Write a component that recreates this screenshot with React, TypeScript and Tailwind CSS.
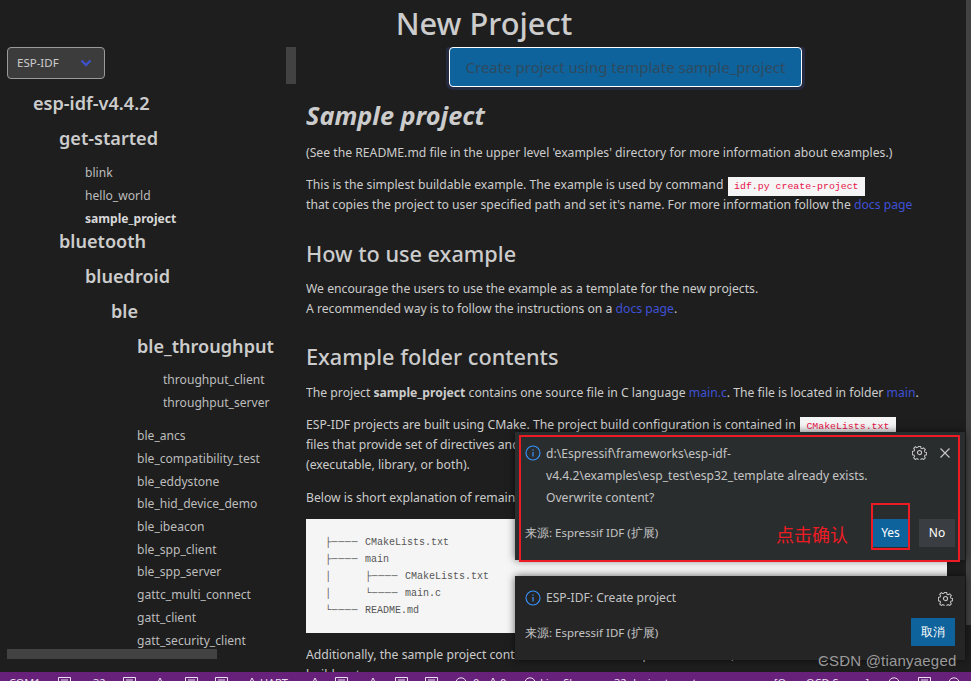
import React from "react";

const sans = "font-['Noto_Sans','Open_Sans',sans-serif]";
const mono = "font-['Liberation_Mono','DejaVu_Sans_Mono',monospace]";

function Code({ children }: { children: React.ReactNode }) {
  return (
    <code className={`${mono} bg-[#f5f5f5] text-[#e8124a] text-[9.9px] leading-none px-[6.5px] py-[4px] ml-[1px]`}>{children}</code>
  );
}

function A({ children }: { children: React.ReactNode }) {
  return <a className="text-[#3f51d6]">{children}</a>;
}

function Big({ pl, children }: { pl: string; children: React.ReactNode }) {
  return <div className={`${pl} h-[35px] flex items-center text-[18.1px] font-semibold text-[#cccccc] leading-none`}>{children}</div>;
}

function Small({ pl, bold, children }: { pl: string; bold?: boolean; children: React.ReactNode }) {
  return (
    <div className={`${pl} h-[22.7px] flex items-center text-[12.1px] leading-none ${bold ? "font-bold text-[#d8d8d8]" : "text-[#bdbdbd]"}`}>
      {children}
    </div>
  );
}

function Info() {
  return (
    <svg width="16" height="16" viewBox="0 0 16 16" fill="none" className="shrink-0">
      <circle cx="8" cy="8" r="7" stroke="#3794ff" strokeWidth="1.1" />
      <rect x="7.4" y="7" width="1.2" height="4.5" fill="#3794ff" />
      <rect x="7.4" y="4.4" width="1.2" height="1.3" fill="#3794ff" />
    </svg>
  );
}

function Gear() {
  return (
    <svg width="15" height="15" viewBox="0 0 16 16" fill="none" stroke="#c5c5c5" strokeWidth="1.2" className="shrink-0">
      <circle cx="8" cy="8" r="2.2" />
      <path d="M6.6 1h2.8l.4 2 1.4.6 1.7-1.1 2 2-1.1 1.7.6 1.4 2 .4v2.8l-2 .4-.6 1.4 1.1 1.7-2 2-1.7-1.1-1.4.6-.4 2H6.6l-.4-2-1.4-.6-1.7 1.1-2-2 1.1-1.7-.6-1.4-2-.4V6.6l2-.4.6-1.4L1.1 3.1l2-2 1.7 1.1 1.4-.6z" transform="translate(0.8 0.8) scale(0.9)" />
    </svg>
  );
}

function Close() {
  return (
    <svg width="12" height="12" viewBox="0 0 12 12" stroke="#c5c5c5" strokeWidth="1.2" className="shrink-0">
      <path d="M1.5 1.5l9 9M10.5 1.5l-9 9" />
    </svg>
  );
}

function Box({ w }: { w: string }) {
  return (
    <div className={`${w} shrink-0`}>
      <svg width="13" height="10" viewBox="0 0 13 10" fill="none" stroke="#e8dff0" strokeWidth="1">
        <path d="M.5 10V.5h12V10M3 3h7" />
      </svg>
    </div>
  );
}

function Peak({ w }: { w: string }) {
  return (
    <div className={`${w} shrink-0`}>
      <svg width="10" height="10" viewBox="0 0 10 10" fill="none" stroke="#e8dff0" strokeWidth="1">
        <path d="M1 9L5 1l4 8" />
      </svg>
    </div>
  );
}

function Round({ w }: { w: string }) {
  return (
    <div className={`${w} shrink-0`}>
      <svg width="12" height="10" viewBox="0 0 12 10" fill="none" stroke="#e8dff0" strokeWidth="1">
        <circle cx="6" cy="6" r="5.2" />
      </svg>
    </div>
  );
}

function Label({ w, children }: { w: string; children: React.ReactNode }) {
  return <span className={`${w} shrink-0 -mt-[1px] whitespace-nowrap`}>{children}</span>;
}

function Tree({ children }: { children: React.ReactNode }) {
  return <span className="inline-block w-[40px] tracking-[0.6px]">{children}</span>;
}

export default function App() {
  return (
    <div className={`${sans} relative w-[971px] h-[681px] overflow-hidden bg-[#1e1e1e] text-[#cccccc] flex flex-col`}>
      <div className="h-[47px] shrink-0 flex items-center justify-center text-[30.8px] font-medium leading-none text-[#cccccc] pr-[3px]">
        New Project
      </div>

      <div className="flex-1 min-h-0 flex">
        {/* Sidebar */}
        <div className="relative w-[296px] shrink-0 overflow-hidden">
          <div className="ml-[7px] w-[98px] h-[32px] rounded-[4px] border border-[#9a9a9a] bg-[#3c3c3c] flex items-center pl-[9px] text-[11.5px] text-[#cccccc]">
            ESP-IDF
            <svg width="12" height="8" viewBox="0 0 12 8" className="ml-[21px]" fill="none" stroke="#3f51c8" strokeWidth="2.4">
              <path d="M1.5 1.5L6 6l4.5-4.5" />
            </svg>
          </div>
          <div className="mt-[7px]">
            <Big pl="pl-[33px]">esp-idf-v4.4.2</Big>
            <Big pl="pl-[59px]">get-started</Big>
            <div className="mt-[6px] -mb-[7px]">
              <Small pl="pl-[85px]">blink</Small>
              <Small pl="pl-[85px]">hello_world</Small>
              <Small pl="pl-[85px]" bold>sample_project</Small>
            </div>
            <Big pl="pl-[59px]">bluetooth</Big>
            <Big pl="pl-[85px]">bluedroid</Big>
            <Big pl="pl-[111px]">ble</Big>
            <Big pl="pl-[137px]">ble_throughput</Big>
            <div className="h-[6px]" />
            <Small pl="pl-[163px]">throughput_client</Small>
            <Small pl="pl-[163px]">throughput_server</Small>
            <div className="h-[10.6px]" />
            {["ble_ancs", "ble_compatibility_test", "ble_eddystone", "ble_hid_device_demo", "ble_ibeacon", "ble_spp_client", "ble_spp_server", "gattc_multi_connect", "gatt_client", "gatt_security_client"].map((t) => (
              <Small key={t} pl="pl-[137px]">{t}</Small>
            ))}
          </div>
          <div className="absolute left-[286px] top-0 w-[10px] h-[37px] bg-[#424242]" />
          <div className="absolute left-[7px] top-[602px] w-[210px] h-[10px] bg-[#424242]" />
        </div>

        {/* Main */}
        <div className="w-[641px] shrink-0 ml-[10px] overflow-hidden text-[12.2px] leading-[20px] text-[#cccccc]">
          <div className="ml-[143px] w-[353px] h-[40px] rounded-[4px] border border-white bg-[#0e639c] shadow-[0_0_0_3px_#252a40] flex items-center justify-center text-[15px] text-[#2f4a5e]">
            Create project using template sample_project
          </div>
          <h3 className="mt-[12px] text-[25.3px] leading-[32px] font-bold italic">Sample project</h3>
          <p className="mt-[12px]">(See the README.md file in the upper level 'examples' directory for more information about examples.)</p>
          <p className="mt-[12px] whitespace-nowrap">
            This is the simplest buildable example. The example is used by command <Code>idf.py create-project</Code>
            <br />
            that copies the project to user specified path and set it's name. For more information follow the <A>docs page</A>
          </p>
          <h2 className="mt-[24px] text-[21.7px] leading-[30px] font-medium">How to use example</h2>
          <p className="mt-[10px]">
            We encourage the users to use the example as a template for the new projects.
            <br />
            A recommended way is to follow the instructions on a <A>docs page</A>.
          </p>
          <h2 className="mt-[23px] text-[21.7px] leading-[30px] font-medium">Example folder contents</h2>
          <p className="mt-[11px] whitespace-nowrap">
            The project <b>sample_project</b> contains one source file in C language <A>main.c</A>. The file is located in folder <A>main</A>.
          </p>
          <p className="mt-[12px] whitespace-nowrap">
            ESP-IDF projects are built using CMake. The project build configuration is contained in <Code>CMakeLists.txt</Code>
            <br />
            files that provide set of directives and instructions describing the project's source files and targets
            <br />
            (executable, library, or both).
          </p>
          <p className="mt-[13px]">Below is short explanation of remaining files in the project folder.</p>
          <pre className={`${mono} mt-[11px] h-[114px] bg-[#f5f5f5] text-[#555555] text-[10px] leading-[17px] pl-[19px] pt-[15px] whitespace-pre`}>
            <div><Tree>├────</Tree>CMakeLists.txt</div>
            <div><Tree>├────</Tree>main</div>
            <div><Tree>│</Tree><Tree>├────</Tree>CMakeLists.txt</div>
            <div><Tree>│</Tree><Tree>└────</Tree>main.c</div>
            <div><Tree>└────</Tree>README.md</div>
          </pre>
          <p className="mt-[12px] whitespace-nowrap">
            Additionally, the sample project contains Makefile and component.mk files, used for the legacy Make based
            <br />
            build system.
          </p>
        </div>
        <div className="flex-1" />
        <div className="w-[5px] shrink-0 bg-[#424242] -mt-[47px] mb-[47px]" />
      </div>

      {/* Status bar */}
      <div className="h-[9px] shrink-0 bg-[#68217a] overflow-hidden flex items-start text-[11px] leading-[14px] text-[#e8dff0] pt-[5px] pl-[9px]">
        <Label w="w-[49px]">COM1</Label>
        <Box w="w-[35px]" />
        <Label w="w-[30px]">32</Label>
        <Box w="w-[32px]" />
        <Peak w="w-[30px]" />
        <Box w="w-[30px]" />
        <Box w="w-[32px]" />
        <Peak w="w-[13px]" />
        <Label w="w-[50px]">UART</Label>
        <Peak w="w-[25px]" />
        <Box w="w-[33px]" />
        <Peak w="w-[27px]" />
        <Box w="w-[30px]" />
        <Box w="w-[30px]" />
        <Round w="w-[18px]" />
        <Label w="w-[15px]">0</Label>
        <Peak w="w-[12px]" />
        <Label w="w-[24px]">0</Label>
        <Round w="w-[16px]" />
        <Label w="w-[234px]">Live Share esp32 device target</Label>
        <Label w="w-[114px]">[OpenOCD Server]</Label>
        <Round w="w-[30px]" />
        <Box w="w-[30px]" />
        <Round w="w-[14px]" />
      </div>

      {/* Notifications */}
      <div className="absolute left-[515px] top-[432px] w-[450px] h-[128px] bg-[#2a2d2e] shadow-[0_0_8px_rgba(0,0,0,0.6)] text-[12.1px] text-[#c4c4c4] pl-[10px] pr-[14px] pt-[13px]">
        <div className="flex items-start gap-[5px]">
          <Info />
          <div className="flex-1 leading-[22px] -mt-[2px]">
            d:\Espressif\frameworks\esp-idf-
            <br />
            v4.4.2\examples\esp_test\esp32_template already exists.
            <br />
            Overwrite content?
          </div>
          <Gear />
          <span className="ml-[7px] mt-[2px]"><Close /></span>
        </div>
        <div className="flex items-center mt-[10px] text-[11.5px] -mr-[4px]">
          <span>来源: Espressif IDF (扩展)</span>
          <span className="ml-auto flex gap-[11px] text-[12px]">
            <span className="w-[35px] h-[28px] bg-[#0e639c] text-white flex items-center justify-center">Yes</span>
            <span className="w-[36px] h-[28px] bg-[#3a3d41] text-white flex items-center justify-center">No</span>
          </span>
        </div>
      </div>

      <div className="absolute left-[515px] top-[576px] w-[450px] h-[84px] bg-[#252526] shadow-[0_0_8px_rgba(0,0,0,0.6)] text-[12.1px] text-[#c4c4c4] pl-[10px] pr-[10px] pt-[13px]">
        <div className="flex items-center gap-[5px]">
          <Info />
          <div className="flex-1">ESP-IDF: Create project</div>
          <span className="mr-[2px]"><Gear /></span>
        </div>
        <div className="flex items-center mt-[11px] text-[11.5px]">
          <span>来源: Espressif IDF (扩展)</span>
          <span className="ml-auto w-[44px] h-[28px] bg-[#0e639c] text-white text-[12px] flex items-center justify-center">取消</span>
        </div>
      </div>

      {/* Annotations */}
      <div className="absolute left-[519px] top-[435px] w-[441px] h-[127px] border-2 border-[#ed1c24]" />
      <div className="absolute left-[871px] top-[503px] w-[39px] h-[47px] border-2 border-[#ed1c24]" />
      <div className="absolute left-[776px] top-[522px] text-[18px] leading-[24px] text-[#ed1c24] font-['Noto_Sans_CJK_SC',sans-serif]">点击确认</div>
      <div className="absolute left-[818px] top-[652px] text-[15px] leading-[18px] tracking-[0.2px] text-[#9a9a9a] font-['Liberation_Sans',sans-serif]">CSDN @tianyaeged</div>
    </div>
  );
}
